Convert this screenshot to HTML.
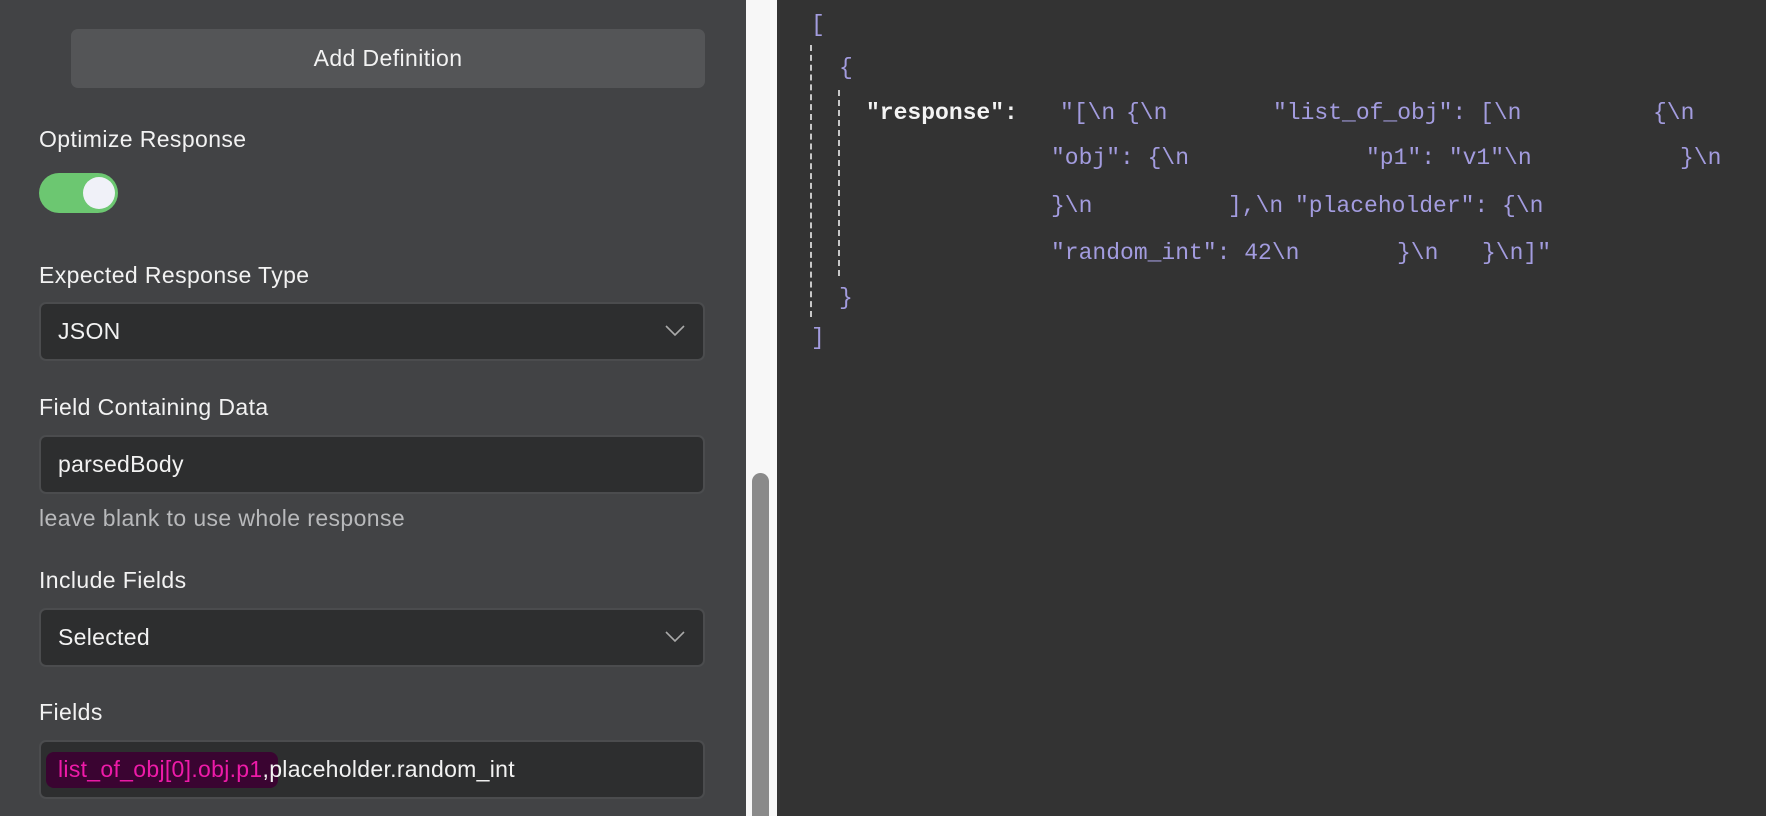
<!DOCTYPE html>
<html><head><meta charset="utf-8"><style>
*{margin:0;padding:0;box-sizing:border-box}
html,body{overflow:hidden}
body{width:1766px;height:816px;background:#323232;position:relative;font-family:"Liberation Sans",sans-serif}
#left{position:absolute;left:0;top:0;width:746px;height:816px;background:#424345;color:#f0f0f0}
.lbl{position:absolute;left:39px;font-size:23px;letter-spacing:0.4px;color:#f2f2f2}
.btn{position:absolute;left:71px;top:29px;width:634px;height:59px;background:#545557;border-radius:7px;text-align:center;line-height:59px;font-size:23px;letter-spacing:0.4px;color:#f2f2f2}
.box{position:absolute;left:39px;width:666px;height:59px;background:#2d2e2f;border:2px solid #4b4c4e;border-radius:7px;font-size:23px;letter-spacing:0.3px;color:#f2f2f2;line-height:55px;padding-left:17px}
.chev{position:absolute;right:18px;top:20px}
#strip{position:absolute;left:746px;top:0;width:31px;height:816px;background:#f7f7f7}
#thumb{position:absolute;left:752px;top:473px;width:17px;height:343px;background:#8a8a8a;border-radius:9px 9px 0 0}
#code{position:absolute;left:777px;top:0;width:989px;height:816px;background:#333333;font-family:"Liberation Mono",monospace;font-size:23px;color:#a39cdf}
#code span{position:absolute;white-space:pre;line-height:30px}
.k{color:#f4f4f4;font-weight:bold}
.dash{position:absolute;width:0;border-left:2px dashed #c8c8c8}
</style></head><body>
<div id="left">
<div class="btn">Add Definition</div>
<div class="lbl" style="top:126px">Optimize Response</div>
<div style="position:absolute;left:39px;top:173px;width:79px;height:40px;border-radius:20px;background:#6cc771"></div>
<div style="position:absolute;left:83px;top:177px;width:32px;height:32px;border-radius:16px;background:#f0f1f8"></div>
<div class="lbl" style="top:262px">Expected Response Type</div>
<div class="box" style="top:302px">JSON<svg class="chev" width="20" height="14" viewBox="0 0 20 14"><path d="M1 2 L10 11 L19 2" fill="none" stroke="#aaa" stroke-width="1.6"/></svg></div>
<div class="lbl" style="top:394px">Field Containing Data</div>
<div class="box" style="top:435px">parsedBody</div>
<div class="lbl" style="top:505px;color:#b8b9bb">leave blank to use whole response</div>
<div class="lbl" style="top:567px">Include Fields</div>
<div class="box" style="top:608px">Selected<svg class="chev" width="20" height="14" viewBox="0 0 20 14"><path d="M1 2 L10 11 L19 2" fill="none" stroke="#aaa" stroke-width="1.6"/></svg></div>
<div class="lbl" style="top:699px">Fields</div>
<div class="box" style="top:740px"><span style="position:absolute;left:5px;top:10px;width:232px;height:36px;background:#3a0431;border-radius:8px"></span><span style="position:relative;color:#ee1aa8">list_of_obj[0].obj.p1</span><span style="position:relative">,placeholder.random_int</span></div>
</div>
<div id="strip"></div><div id="thumb"></div>
<div id="code">
<div class="dash" style="left:33px;top:45px;height:272px"></div>
<div class="dash" style="left:61px;top:90px;height:186px"></div>
<span style="left:34px;top:10px">[</span>
<span style="left:62px;top:53px">{</span>
<span style="left:89px;top:98px" class="k">"response":</span>
<span style="left:283px;top:98px">"[\n</span>
<span style="left:349px;top:98px">{\n</span>
<span style="left:496px;top:98px">"list_of_obj": [\n</span>
<span style="left:876px;top:98px">{\n</span>
<span style="left:274px;top:143px">"obj": {\n</span>
<span style="left:589px;top:143px">"p1": "v1"\n</span>
<span style="left:903px;top:143px">}\n</span>
<span style="left:274px;top:191px">}\n</span>
<span style="left:451px;top:191px">],\n</span>
<span style="left:518px;top:191px">"placeholder": {\n</span>
<span style="left:274px;top:238px">"random_int": 42\n</span>
<span style="left:620px;top:238px">}\n</span>
<span style="left:705px;top:238px">}\n]"</span>
<span style="left:62px;top:283px">}</span>
<span style="left:34px;top:323px">]</span>
</div>
</body></html>
